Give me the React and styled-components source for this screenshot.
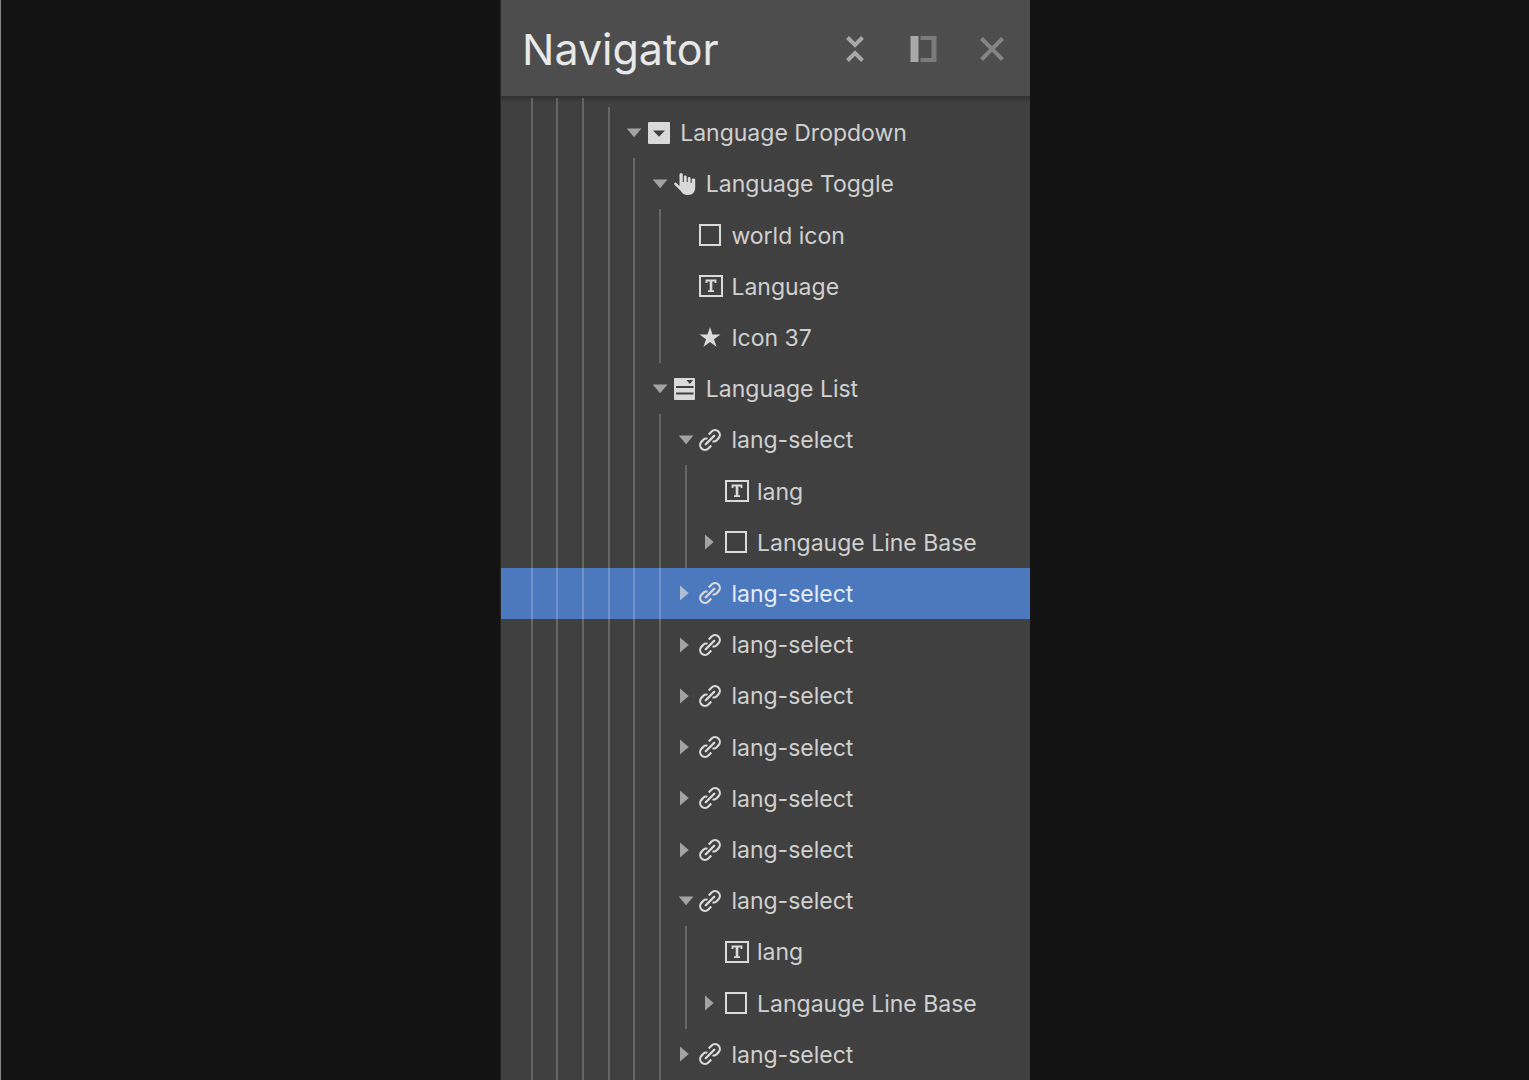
import React, { useState } from "react";
import styled, { createGlobalStyle } from "styled-components";

const Global = createGlobalStyle`
  * { box-sizing: border-box; }
  body {
    margin: 0;
    background: #131313;
    font-family: Inter, "Liberation Sans", sans-serif;
    -webkit-font-smoothing: antialiased;
  }
`;

const Page = styled.main`
  display: flex;
  justify-content: center;
  min-height: 100vh;
  border-left: 1px solid #8a8a8a;
`;

const Panel = styled.section`
  display: flex;
  flex-direction: column;
  width: 100%;
  max-width: 530px;
  border-left: 1px solid #262626;
  background: #404040;
`;

const Header = styled.header`
  display: flex;
  align-items: center;
  justify-content: space-between;
  height: 96px;
  padding: 2px 20px 0 21px;
  background: #4d4d4d;
`;

const Title = styled.h1`
  margin: 0;
  color: #e8e8e8;
  font-size: 43px;
  line-height: 52px;
  font-weight: 400;
`;

const Actions = styled.div`
  display: flex;
  gap: 32px;
`;

const IconButton = styled.button`
  display: grid;
  place-items: center;
  width: 36px;
  height: 36px;
  padding: 0;
  border: 0;
  background: none;
  color: ${(p) => (p.$dim ? "#848484" : "#a8a8a8")};
  cursor: pointer;
`;

const Tree = styled.ul`
  flex: 1;
  display: grid;
  grid-template-rows: 9px;
  grid-auto-rows: minmax(44px, 1fr);
  margin: 0;
  padding: 0;
  border-top: 2px solid #333;
  background: linear-gradient(#363636, #404040 5px);
  list-style: none;
`;

const Row = styled.li`
  display: grid;
  grid-template-columns: repeat(19, minmax(0, 1fr));
  padding: 0 24px 0 18px;
  background: ${(p) => (p.$selected ? "#4c79bd" : "transparent")};
  color: ${(p) => (p.$selected ? "#e6ecf5" : "#d0d0d0")};
`;

const Guide = styled.span`
  grid-row: 1;
  justify-self: center;
  width: 2px;
  background: rgba(255, 255, 255, 0.2);
`;

const Toggle = styled.button`
  grid-row: 1;
  grid-column: ${(p) => p.$column};
  display: flex;
  align-items: center;
  justify-content: center;
  padding: 0;
  border: 0;
  background: none;
  color: ${(p) => (p.$selected ? "#adbdd6" : "#a3a3a3")};
  cursor: pointer;
`;

const Entry = styled.button`
  grid-row: 1;
  grid-column: ${(p) => p.$column} / -1;
  display: flex;
  align-items: center;
  gap: 7px;
  padding: 0;
  border: 0;
  background: none;
  color: inherit;
  font-family: inherit;
  font-size: 23px;
  line-height: 32px;
  text-align: left;
  white-space: nowrap;
  cursor: pointer;
`;

const Label = styled.span`
  padding-top: 1px;
`;

const Glyph = styled.svg`
  flex: none;
  width: 26px;
  height: 24px;
  color: #dadada;
`;

const Arrow = ({ open }) => (
  <svg width="16" height="16" viewBox="0 0 16 16" fill="currentColor" aria-hidden="true">
    <path d={open ? "M.8 3.500h14.600L8.100 12.300z" : "M2 .5v15L10.700 8z"} />
  </svg>
);

const shapes = {
  dropdown: (
    <path
      fill="currentColor"
      fillRule="evenodd"
      d="M2 1h20a1 1 0 0 1 1 1v20a1 1 0 0 1-1 1H2a1 1 0 0 1-1-1V2a1 1 0 0 1 1-1zM6 9.6l6 6.2 6-6.2z"
    />
  ),
  hand: (
    <path
      fill="currentColor"
      d="M6.500 2.500Q6.500 1 8.100 1t1.700 1.500V10h1.100V4.600Q10.900 3.500 12.300 3.500t1.400 1.100V10h1.100V6Q14.800 4.900 16.200 4.900T17.600 6v5h1.100V7.600q0-1.200 1.700-1.200t1.800 1.400V15.500c0 4.800-2.900 7.500-7.200 7.500-3.800 0-5.800-1.400-7.400-4.200L1.300 12.400c-.5-1.400.8-2.300 2.100-1.500L6.500 14z"
    />
  ),
  box: <rect x="2" y="2" width="20" height="20" fill="none" stroke="currentColor" strokeWidth="2" />,
  text: (
    <g fill="none" stroke="currentColor" strokeWidth="2">
      <rect x="2" y="2" width="22" height="20" />
      <path d="M8.500 9V6.500h9V9M10 17.200h6" strokeWidth="1.800" />
      <path d="M13 6v11" strokeWidth="2.600" />
    </g>
  ),
  star: (
    <path
      fill="currentColor"
      d="M12 2l2.500 7.600h8l-6.500 4.600 2.500 7.600-6.500-4.700-6.500 4.700L8 14.200 1.500 9.600h8z"
    />
  ),
  list: (
    <path
      fill="currentColor"
      fillRule="evenodd"
      d="M2 1h19a1 1 0 0 1 1 1v20a1 1 0 0 1-1 1H2a1 1 0 0 1-1-1V2a1 1 0 0 1 1-1zM13.500 3l3.300 4 3.300-4zM3 9v2h17.500V9zM3 15.500v2h17.500v-2z"
    />
  ),
  link: (
    <g fill="none" stroke="currentColor" strokeWidth="2.200" transform="translate(12 12) rotate(-45)">
      <path d="M-3 4.800H-7.100A4.800 4.800 0 0 1-7.100-4.800H-4.200Q-1.800-4.800-1-2.600" />
      <path d="M3-4.800H7.100A4.800 4.800 0 0 1 7.100 4.800H4.200Q1.800 4.800 1 2.600" />
      <path d="M-6 0h12" strokeLinecap="round" strokeWidth="2.400" />
    </g>
  ),
};

const rows = [
  [4, "dropdown", "Language Dropdown", "open"],
  [5, "hand", "Language Toggle", "open"],
  [6, "box", "world icon"],
  [6, "text", "Language"],
  [6, "star", "Icon 37"],
  [5, "list", "Language List", "open"],
  [6, "link", "lang-select", "open"],
  [7, "text", "lang"],
  [7, "box", "Langauge Line Base", "closed"],
  [6, "link", "lang-select", "closed"],
  [6, "link", "lang-select", "closed"],
  [6, "link", "lang-select", "closed"],
  [6, "link", "lang-select", "closed"],
  [6, "link", "lang-select", "closed"],
  [6, "link", "lang-select", "closed"],
  [6, "link", "lang-select", "open"],
  [7, "text", "lang"],
  [7, "box", "Langauge Line Base", "closed"],
  [6, "link", "lang-select", "closed"],
];

const Guides = ({ count }) => Array.from({ length: count }, (_, i) => <Guide key={i} />);

function TreeRow({ level, icon, label, state, selected, onSelect }) {
  return (
    <Row $selected={selected}>
      <Guides count={level} />
      {state && (
        <Toggle
          type="button"
          $column={level + 1}
          $selected={selected}
          aria-label={label}
          aria-expanded={state === "open"}
        >
          <Arrow open={state === "open"} />
        </Toggle>
      )}
      <Entry type="button" $column={level + 2} onClick={onSelect}>
        <Glyph viewBox="0 0 26 24" aria-hidden="true">{shapes[icon]}</Glyph>
        <Label>{label}</Label>
      </Entry>
    </Row>
  );
}

export default function App() {
  const [selected, setSelected] = useState(9);
  return (
    <>
      <Global />
      <Page>
        <Panel>
          <Header>
            <Title>Navigator</Title>
            <Actions>
              <IconButton type="button" aria-label="Collapse all">
                <svg width="28" height="28" viewBox="0 0 28 28" fill="none" stroke="currentColor" strokeWidth="4">
                  <path d="M5.500 2.500L13 10l7.500-7.500M5.500 25.500L13 18l7.500 7.500" />
                </svg>
              </IconButton>
              <IconButton type="button" aria-label="Dock panel">
                <svg width="28" height="28" viewBox="0 0 28 28" fill="currentColor">
                  <path d="M.5 1h8v26h-8z" />
                  <path d="M10.500 1h16v26h-16v-4h11V5h-11z" fill="#7b7b7b" />
                </svg>
              </IconButton>
              <IconButton type="button" aria-label="Close" $dim>
                <svg width="28" height="28" viewBox="0 0 28 28" fill="none" stroke="currentColor" strokeWidth="4">
                  <path d="M3.500 3.500l21 21M24.500 3.500l-21 21" />
                </svg>
              </IconButton>
            </Actions>
          </Header>
          <Tree>
            <Row>
              <Guides count={3} />
            </Row>
            {rows.map(([level, icon, label, state], i) => (
              <TreeRow
                key={i}
                level={level}
                icon={icon}
                label={label}
                state={state}
                selected={selected === i}
                onSelect={() => setSelected(i)}
              />
            ))}
          </Tree>
        </Panel>
      </Page>
    </>
  );
}
